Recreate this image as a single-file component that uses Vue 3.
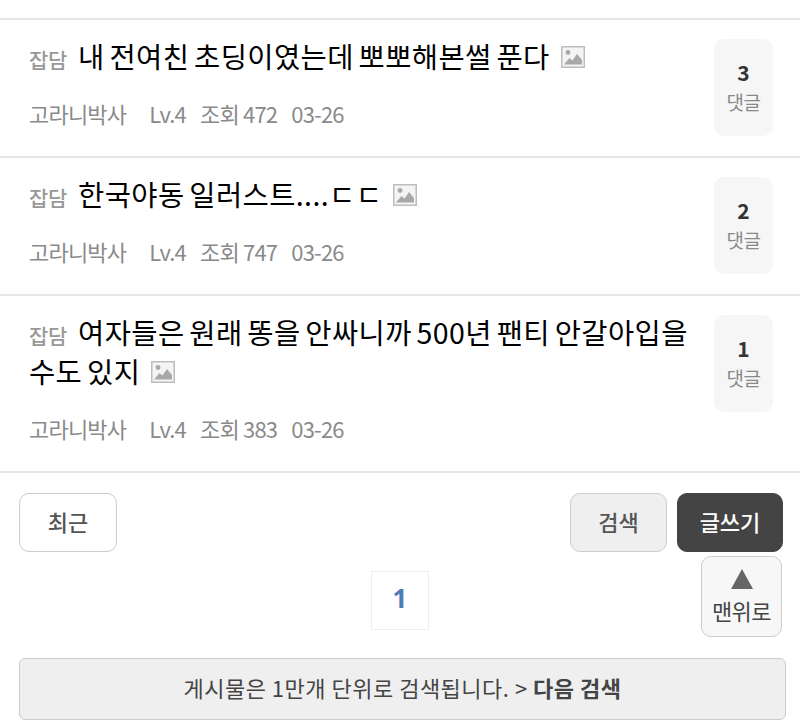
<script setup>
const posts = [
  { id: 1, title: '내 전여친 초딩이였는데 뽀뽀해본썰 푼다', views: 472, replies: 3 },
  { id: 2, title: '한국야동 일러스트....ㄷㄷ', views: 747, replies: 2 },
  { id: 3, title: '여자들은 원래 똥을 안싸니까 500년 팬티 안갈아입을 수도 있지', views: 383, replies: 1 },
]
</script>

<template>
  <div class="page">
    <ul class="list">
      <li v-for="p in posts" :key="p.id" class="row">
        <div class="main">
          <div class="title">
            <span class="cat">잡담</span>{{ p.title }}<svg class="pic" viewBox="0 0 24 22" width="24" height="22">
              <rect x="0.75" y="0.75" width="22.5" height="20.5" fill="#f4f4f4" stroke="#bdbdbd" stroke-width="1.5" />
              <circle cx="7" cy="6.5" r="2.4" fill="#a8a8a8" />
              <path d="M3 18.5 L8.5 12 L11.5 14.5 L16 8 L21 14 V18.5 Z" fill="#a8a8a8" />
            </svg>
          </div>
          <div class="meta">
            <span class="author">고라니박사</span>
            <span>Lv.4</span>
            <span>조회 {{ p.views }}</span>
            <span>03-26</span>
          </div>
        </div>
        <div class="reply">
          <strong>{{ p.replies }}</strong>
          <span>댓글</span>
        </div>
      </li>
    </ul>

    <div class="actions">
      <button class="btn plain">최근</button>
      <div class="right">
        <button class="btn gray">검색</button>
        <button class="btn dark">글쓰기</button>
      </div>
    </div>

    <div class="pager">
      <span class="current">1</span>
      <button class="top"><i class="tri"></i>맨위로</button>
    </div>

    <button class="next">게시물은 1만개 단위로 검색됩니다. &gt; <b>다음 검색</b></button>
  </div>
</template>

<style>
html, body { margin: 0; background: #fff; }
</style>

<style scoped>
.page {
  width: 800px;
  height: 723px;
  overflow: hidden;
  padding-top: 18px;
  box-sizing: border-box;
  font-family: "Noto Sans CJK KR", "Noto Sans", sans-serif;
}
.list { list-style: none; margin: 0; padding: 0; border-top: 2px solid #e6e6e6; }
.row {
  display: flex;
  justify-content: space-between;
  padding: 16px 27px 20px 29px;
  border-bottom: 2px solid #e6e6e6;
}
.main { width: 664px; display: flex; flex-direction: column; }
.title {
  font-size: 28.5px;
  line-height: 39px;
  color: #000;
  letter-spacing: 0.4px;
  word-spacing: -2px;
  font-weight: 400;
}
.cat {
  font-size: 21px;
  line-height: 1;
  color: #999;
  font-weight: 500;
  margin-right: 11px;
  letter-spacing: -0.3px;
}
.pic { margin-left: 11px; vertical-align: 0; }
.meta {
  margin: 19px 0 3px;
  display: flex;
  font-size: 22px;
  line-height: 39px;
  color: #8a8a8a;
  letter-spacing: -0.8px;
  gap: 14px;
}
.author { margin-right: 9px; }
.reply {
  width: 59px;
  height: 97px;
  margin-top: 3px;
  box-sizing: border-box;
  background: #f6f6f6;
  border-radius: 10px;
  display: flex;
  flex-direction: column;
  align-items: center;
  padding-top: 18px;
  flex-shrink: 0;
}
.reply strong { font-size: 21px; line-height: 30px; color: #333; font-weight: 700; }
.reply span { font-size: 19px; line-height: 29px; color: #8a8a8a; letter-spacing: -0.5px; }
.actions {
  display: flex;
  justify-content: space-between;
  padding: 20px 17px 0 19px;
}
.right { display: flex; gap: 10px; }
.btn {
  height: 59px;
  width: 98px;
  box-sizing: border-box;
  border-radius: 10px;
  font: 500 22px "Noto Sans CJK KR", sans-serif;
  padding: 0 0 3px;
}
.plain { background: #fff; border: 1.5px solid #ccc; color: #555; }
.gray { width: 97px; background: #efefef; border: 1.5px solid #ccc; color: #555; }
.dark { width: 106px; background: #444; border: 1px solid #444; color: #fff; }
.pager {
  position: relative;
  display: flex;
  justify-content: center;
  padding-top: 19px;
  height: 96px;
  box-sizing: border-box;
}
.current {
  width: 58px;
  height: 59px;
  box-sizing: border-box;
  border: 1px solid #eee;
  padding-bottom: 5px;
  display: flex;
  align-items: center;
  justify-content: center;
  color: #4f7ab8;
  font: 700 26px "Noto Sans", sans-serif;
}
.top {
  position: absolute;
  left: 701px;
  top: 4px;
  width: 81px;
  height: 81px;
  box-sizing: border-box;
  background: #f7f7f7;
  border: 1.5px solid #ccc;
  border-radius: 10px;
  color: #444;
  font: 400 22px "Noto Sans CJK KR", sans-serif;
  letter-spacing: -0.5px;
  padding: 12px 0 0;
  display: flex;
  flex-direction: column;
  align-items: center;
  gap: 5px;
}
.tri {
  width: 0;
  height: 0;
  border-left: 11px solid transparent;
  border-right: 11px solid transparent;
  border-bottom: 20px solid #666;
}
.next {
  display: block;
  margin: 10px 0 0 19px;
  width: 767px;
  height: 62px;
  box-sizing: border-box;
  background: #efefef;
  border: 1.5px solid #ccc;
  border-radius: 6px;
  color: #444;
  font: 400 22px "Noto Sans CJK KR", sans-serif;
  letter-spacing: 0.5px;
  padding: 0 0 4px;
}
.next b { font-weight: 700; }
</style>
